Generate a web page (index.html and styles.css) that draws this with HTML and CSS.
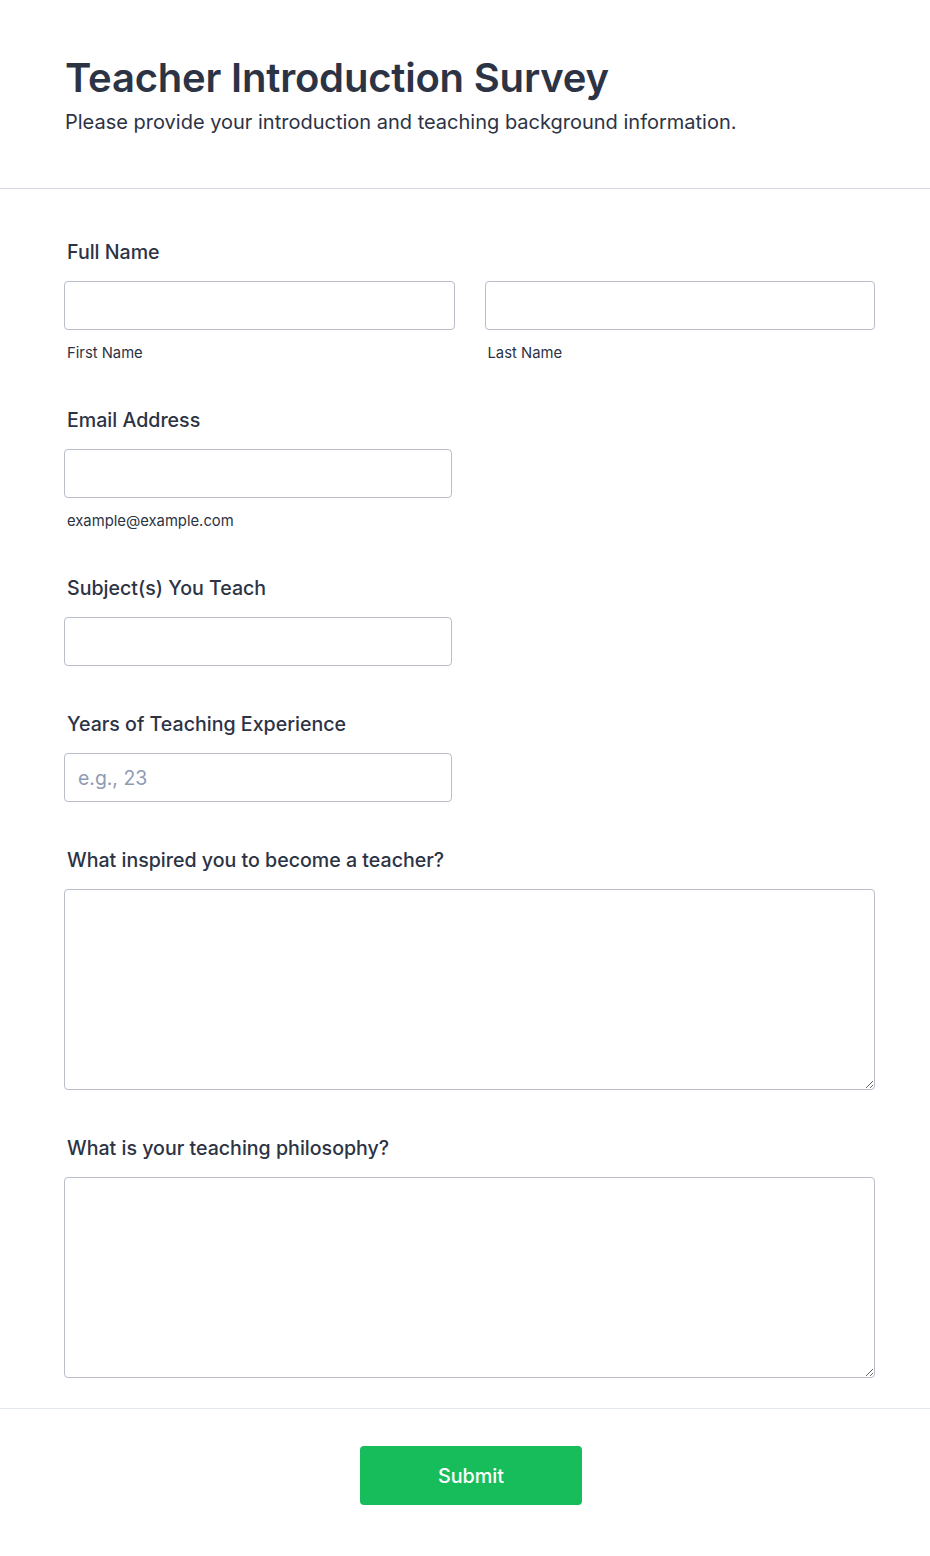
FILE: index.html
```html
<!doctype html>
<html lang="en">
  <head>
    <meta charset="UTF-8" />
    <meta name="viewport" content="width=device-width, initial-scale=1.0" />
    <title>Teacher Introduction Survey</title>
    <link rel="stylesheet" href="styles.css">
  </head>
  <body>
    <form class="survey">
      <header class="survey-header">
        <h1>Teacher Introduction Survey</h1>
        <p>Please provide your introduction and teaching background information.</p>
      </header>

      <div class="survey-body">
        <div class="field">
          <label class="field-label">Full Name</label>
          <div class="field-row">
            <div class="field-col">
              <input type="text" id="firstName" />
              <span class="sublabel">First Name</span>
            </div>
            <div class="field-col">
              <input type="text" id="lastName" />
              <span class="sublabel">Last Name</span>
            </div>
          </div>
        </div>

        <div class="field">
          <label class="field-label" for="email">Email Address</label>
          <div class="field-half">
            <input type="email" id="email" />
            <span class="sublabel">example@example.com</span>
          </div>
        </div>

        <div class="field">
          <label class="field-label" for="subjects">Subject(s) You Teach</label>
          <div class="field-half">
            <input type="text" id="subjects" />
          </div>
        </div>

        <div class="field">
          <label class="field-label" for="years">Years of Teaching Experience</label>
          <div class="field-half">
            <input type="text" id="years" placeholder="e.g., 23" />
          </div>
        </div>

        <div class="field">
          <label class="field-label" for="inspired">What inspired you to become a teacher?</label>
          <textarea id="inspired"></textarea>
        </div>

        <div class="field">
          <label class="field-label" for="philosophy">What is your teaching philosophy?</label>
          <textarea id="philosophy"></textarea>
        </div>
      </div>

      <div class="survey-footer">
        <button type="button" class="submit">Submit</button>
      </div>
    </form>
  </body>
</html>
```

FILE: styles.css
```css
body {
  margin: 0;
  font-family: Inter, "Noto Sans", Arial, sans-serif;
  background: #ffffff;
  color: #2c3345;
}
.survey {
  width: 930px;
}
.survey-header {
  padding: 54px 0 0 65px;
  height: 134px;
  border-bottom: 1px solid #d9d9ea;
}
.survey-header h1 {
  margin: 0;
  font-size: 40px;
  font-weight: 600;
  line-height: 48px;
  letter-spacing: -0.2px;
}
.survey-header p {
  margin: 8px 0 0;
  font-size: 20px;
  line-height: 24px;
}
.survey-body {
  padding: 52px 55px 30px 64px;
  display: flex;
  flex-direction: column;
  gap: 47px;
}
.field {
  display: flex;
  flex-direction: column;
}
.field-label {
  font-size: 19.6px;
  font-weight: 500;
  line-height: 22px;
  margin: 0 0 18px 3px;
}
.field-row {
  display: flex;
  gap: 30px;
}
.field-col {
  flex: 1;
  display: flex;
  flex-direction: column;
}
.field-half {
  width: 388px;
  display: flex;
  flex-direction: column;
}
input,
textarea {
  box-sizing: border-box;
  font-family: inherit;
  font-size: 19.4px;
  color: #2c3345;
  border: 1px solid #b8bdc9;
  border-radius: 4px;
  background: #ffffff;
  padding: 0 13px;
}
input {
  height: 49px;
}
input::placeholder {
  color: #8d9bb3;
}
textarea {
  height: 201px;
  resize: vertical;
  padding: 10px 13px;
}
.sublabel {
  font-size: 14.8px;
  line-height: 17px;
  margin: 15px 0 0 3px;
  color: #2c3345;
}
.survey-footer {
  border-top: 1px solid #e3e8ee;
  padding: 37px 0 50px;
  display: flex;
  justify-content: center;
}
.submit {
  width: 222px;
  height: 59px;
  margin-left: 12px;
  border: none;
  border-radius: 4px;
  background: #18bd5b;
  color: #ffffff;
  font-family: inherit;
  font-size: 19.8px;
  font-weight: 500;
  cursor: pointer;
}
```
